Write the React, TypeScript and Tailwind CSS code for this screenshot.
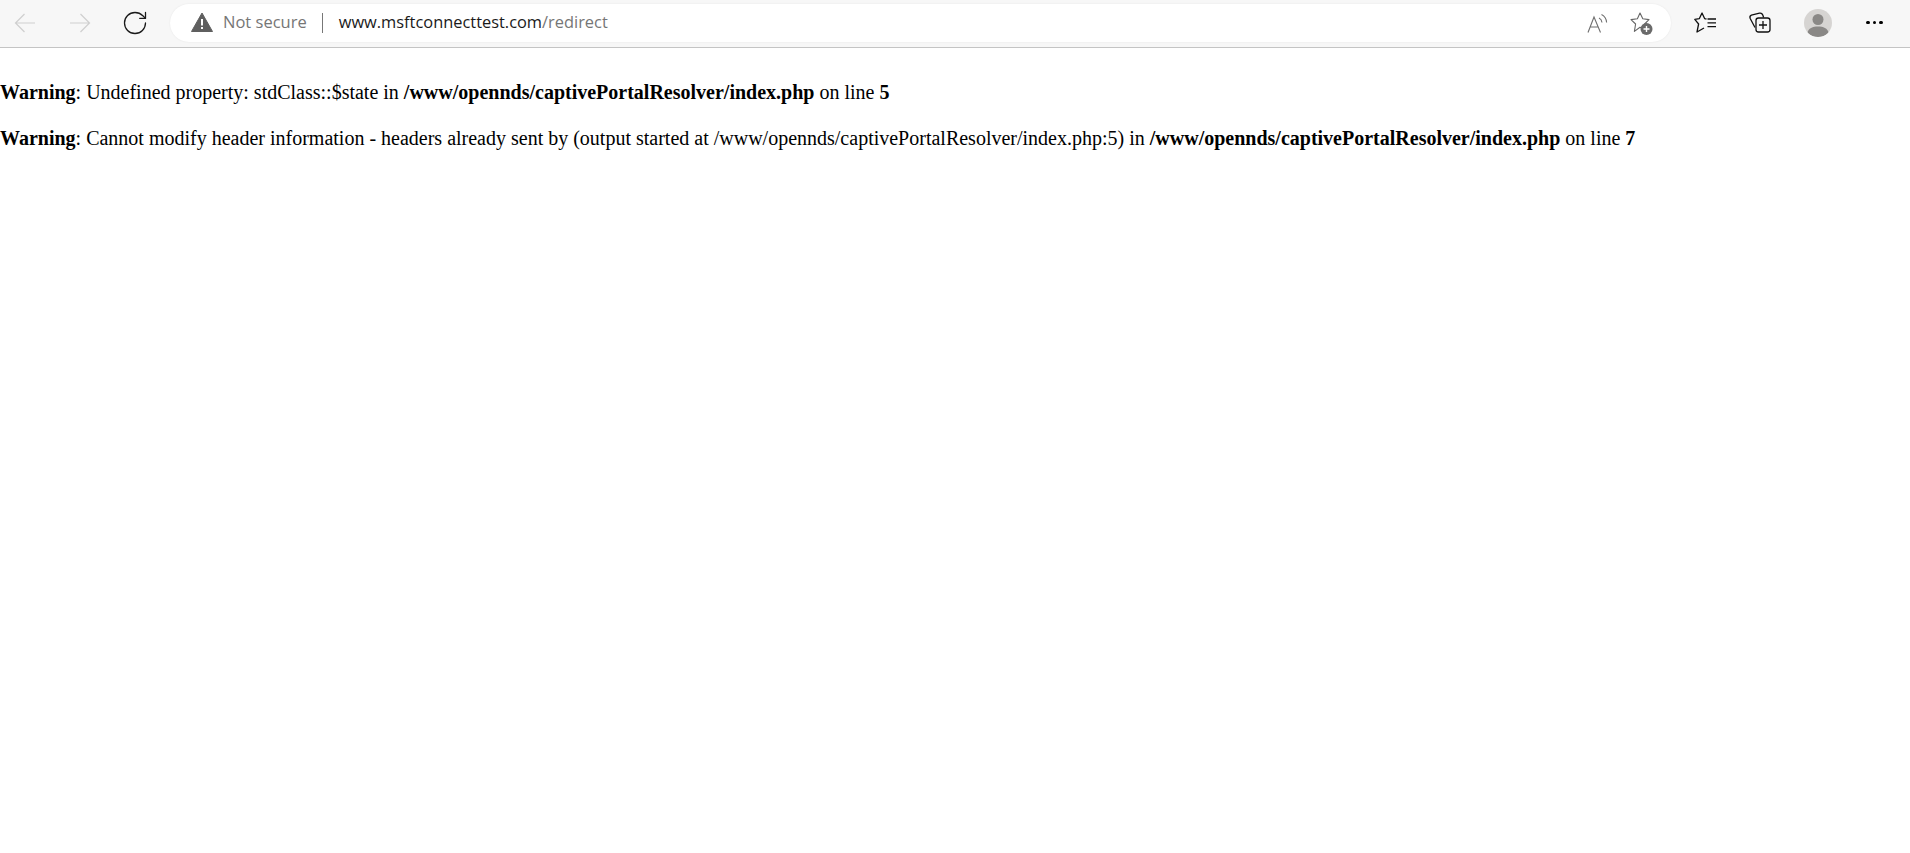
import { RotateCw } from "lucide-react";

function NavArrow({ flip }: { flip?: boolean }) {
  return (
    <svg width="22" height="20" viewBox="0 0 22 20" fill="none" stroke="#cfcfcf" strokeWidth="1.2" className={flip ? "-scale-x-100" : ""}>
      <path d="M1.5 10 H21 M10.5 1 L1.5 10 L10.5 19" />
    </svg>
  );
}

function ReadAloudIcon() {
  return (
    <svg width="22" height="22" viewBox="0 0 22 22" fill="none" stroke="#6f6f6f" strokeWidth="1.1">
      <path d="M1 20.5 L7 5 L13.5 20.5 M3.2 15 H11.5" />
      <path d="M12 6 C13.6 6.8 14.8 8.5 15 10.5 M14.5 2.5 C17.4 4 19.4 7 19.6 10.5" />
    </svg>
  );
}

function FavoriteAddIcon() {
  return (
    <svg width="24" height="24" viewBox="0 0 24 24" fill="none">
      <path d="M10 2 L12.8 7.8 L19 8.6 L14.6 13 L15.6 19 L10 16.2 L4.4 20.4 L5.6 13 L1 8.6 L7.4 7.8 Z" stroke="#666" strokeWidth="1.1" strokeLinejoin="round" />
      <circle cx="16.5" cy="18" r="6" fill="#6a6a6a" />
      <path d="M16.5 15 V21 M13.5 18 H19.5" stroke="#fff" strokeWidth="1.4" />
    </svg>
  );
}

function FavoritesIcon() {
  return (
    <svg width="24" height="24" viewBox="0 0 24 24" fill="none" stroke="#111" strokeWidth="1.3" strokeLinejoin="round">
      <path d="M12.5 8 L10.6 7.6 L8 2 L5.4 7.6 L0.8 8.3 L4.6 13 L3 21 L10 17" />
      <path d="M13.5 8 H22 M13.5 11.8 H22 M13.5 15.7 H22" />
    </svg>
  );
}

function CollectionsIcon() {
  return (
    <svg width="24" height="24" viewBox="0 0 24 24" fill="none" stroke="#111" strokeWidth="1.3" strokeLinejoin="round">
      <path d="M7 16.5 L2.2 7.5 C1.6 6 2 4.8 3.4 4.2 L11.5 2.2 C13 1.8 14.2 2.6 14.8 4 L15.6 6.5" />
      <rect x="8" y="7" width="14" height="14" rx="2.5" />
      <path d="M15 10 V18 M11 14 H19" />
    </svg>
  );
}

function ProfileIcon() {
  return (
    <div className="flex h-7 w-7 items-center justify-center overflow-hidden rounded-full bg-[#d6d4d2]">
      <svg width="28" height="28" viewBox="0 0 28 28" fill="#8a8886">
        <circle cx="14" cy="10.5" r="5.5" />
        <path d="M3.5 24 C4 19 9 17.5 14 17.5 C19 17.5 24 19 24.5 24 C21 27 18 28 14 28 C10 28 7 27 3.5 24 Z" />
      </svg>
    </div>
  );
}

export default function App() {
  return (
    <div className="min-h-screen bg-white font-['Liberation_Serif',serif] text-black">
      <header className="flex h-12 items-center border-b border-[#c4c4c4] bg-[#f7f7f7] pb-[1px]">
        <div className="mb-[1px] flex w-[170px] items-center pl-[14px]">
          <NavArrow />
          <div className="ml-[33px]"><NavArrow flip /></div>
          <div className="ml-[30px]"><RotateCw size={28} strokeWidth={1.1} color="#1a1a1a" /></div>
        </div>
        <div className="flex h-[38px] w-[1501px] items-center rounded-full bg-white pl-[21px] pr-[17px] font-['Open_Sans',sans-serif] shadow-[0_0_2px_rgba(0,0,0,0.08)]">
          <svg width="22" height="20" viewBox="0 0 22 20" fill="#5f5f5f" className="mb-[2px]">
            <path d="M11 1 L21.5 19.5 H0.5 Z" stroke="#5f5f5f" strokeLinejoin="round" />
            <path d="M10 7 H12 V13.5 H10 Z M10 15 H12 V17 H10 Z" fill="#fff" />
          </svg>
          <span className="mb-[2px] ml-[10px] text-[16.5px] text-[#767676]">Not secure</span>
          <span className="mb-[1px] ml-[15px] h-5 w-px bg-[#777]" />
          <span className="mb-[1px] ml-[16px] text-[16.4px] text-[#1a1a1a]">
            www.msftconnecttest.com<span className="text-[#767676]">/redirect</span>
          </span>
          <div className="mb-[1px] ml-auto flex items-center gap-[21px]">
            <ReadAloudIcon />
            <FavoriteAddIcon />
          </div>
        </div>
        <div className="mb-[1px] flex flex-1 items-center pl-[23px]">
          <FavoritesIcon />
          <div className="ml-[30px]"><CollectionsIcon /></div>
          <div className="ml-[32px]"><ProfileIcon /></div>
          <div className="ml-[34px] flex gap-[3px]">
            <span className="h-[3.5px] w-[3.5px] rounded-full bg-black" />
            <span className="h-[3.5px] w-[3.5px] rounded-full bg-black" />
            <span className="h-[3.5px] w-[3.5px] rounded-full bg-black" />
          </div>
        </div>
      </header>
      <main className="pt-[33px] text-[20px] leading-[23px]">
        <p>
          <b>Warning</b>: Undefined property: stdClass::$state in <b>/www/opennds/captivePortalResolver/index.php</b> on line <b>5</b>
        </p>
        <p className="mt-[23px]">
          <b>Warning</b>: Cannot modify header information - headers already sent by (output started at /www/opennds/captivePortalResolver/index.php:5) in <b>/www/opennds/captivePortalResolver/index.php</b> on line <b>7</b>
        </p>
      </main>
    </div>
  );
}
